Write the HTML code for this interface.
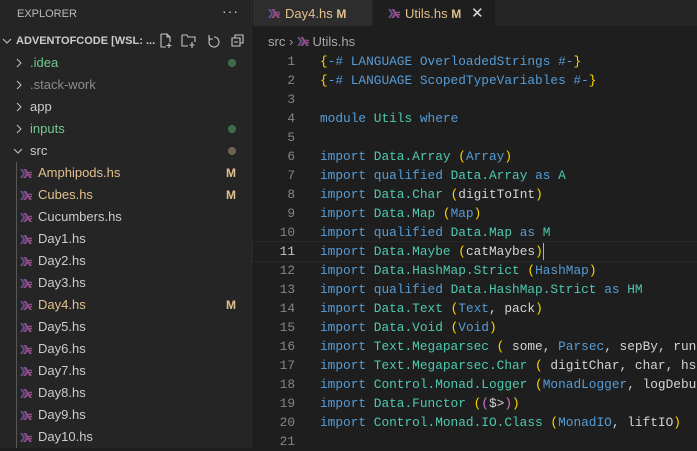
<!DOCTYPE html><html><head><style>
*{margin:0;padding:0;box-sizing:border-box}
body{width:697px;height:448px;overflow:hidden;background:#1e1e1e;font-family:"Liberation Sans",sans-serif;font-size:13px;color:#ccc;position:relative}
#side{position:absolute;left:0;top:0;width:252px;height:448px;background:#252526;border-right:1px solid #2b2b2b}
.r{position:absolute;left:0;width:252px;height:22px;line-height:22px;white-space:nowrap}
.ch{position:absolute;top:6px}
.dot{position:absolute;right:16px;top:7px;width:8px;height:8px;border-radius:4px}
.m{position:absolute;left:226px;color:#e2c08d;font-weight:bold;font-size:12px}
.hs{position:absolute;left:20px;top:7px}
.fn{position:absolute;left:38px}
#tabs{position:absolute;left:253px;top:0;width:444px;height:35px;background:#252526}
.tab{position:absolute;top:0;height:35px;line-height:27px;font-size:13px;color:#e2c08d}
#code{position:absolute;left:253px;top:1px;font-family:"Liberation Mono",monospace;font-size:12.8px}
.l{position:absolute;left:0;height:19px;line-height:19px;white-space:pre;width:444px}
.n{position:absolute;width:42px;text-align:right;color:#858585}
.t{position:absolute;left:67px}
.k{color:#569cd6}.c{color:#4ec9b0}.y{color:#ffd700}.p{color:#da70d6}.w{color:#d4d4d4}
</style></head><body>
<svg width="0" height="0" style="position:absolute"><defs><symbol id="h" viewBox="0 0 12 9"><path d="M0 0h2.5l3 4.5-3 4.5H0l3-4.5z" fill="#5e5086"/><path d="M3.5 0H6l6 9H9.5L7.6 6.2 5.8 9H3.3l3-4.5z" fill="#8f4e8b"/><path d="M8 2.7h4v1.4H8.9zM9.1 4.9H12v1.4H10z" fill="#8f4e8b"/></symbol>
<symbol id="cr" viewBox="0 0 10 10"><path d="M3 1l4 4-4 4" fill="none" stroke="#c5c5c5" stroke-width="1"/></symbol>
<symbol id="cd" viewBox="0 0 10 10"><path d="M1 3l4 4 4-4" fill="none" stroke="#c5c5c5" stroke-width="1"/></symbol></defs></svg>
<div id="side">
<div style="position:absolute;left:17px;top:8px;font-size:11px;color:#bbb">EXPLORER</div>
<div style="position:absolute;left:222px;top:3px;color:#ccc;font-size:14px;letter-spacing:1px">···</div>
<div class="r" style="top:30px"><svg class="ch" style="left:2px" width="10" height="10"><use href="#cd"/></svg><span style="position:absolute;left:16px;font-size:11px;font-weight:bold;color:#ccc">ADVENTOFCODE [WSL: ...</span>
<svg style="position:absolute;left:159px;top:3px" width="88" height="16" fill="none" stroke="#c5c5c5" stroke-width="1.1"><path d="M2 1h6l3 3v5M2 1v13h5M10 10v5M7.5 12.5h5M8 1v3h3"/><path d="M23 2h5l1 2h7v5M23 2v11h6M33 9v6M30.5 12h5"/><path d="M55 4a5 5 0 1 1-4 2M50 2v4h4" /><path d="M73 5h8v8h-8zM76 5V2h8v8h-3M75 9h4"/></svg></div>
<div class="r" style="top:52px"><svg class="ch" style="left:14px" width="10" height="10"><use href="#cr"/></svg><span class="fn" style="left:30px;color:#73c991">.idea</span><span class="dot" style="background:#3f6e4f"></span></div>
<div class="r" style="top:74px"><svg class="ch" style="left:14px" width="10" height="10"><use href="#cr"/></svg><span class="fn" style="left:30px;color:#8c8c8c">.stack-work</span></div>
<div class="r" style="top:96px"><svg class="ch" style="left:14px" width="10" height="10"><use href="#cr"/></svg><span class="fn" style="left:30px;color:#ccc">app</span></div>
<div class="r" style="top:118px"><svg class="ch" style="left:14px" width="10" height="10"><use href="#cr"/></svg><span class="fn" style="left:30px;color:#73c991">inputs</span><span class="dot" style="background:#3f6e4f"></span></div>
<div class="r" style="top:140px"><svg class="ch" style="left:13px" width="10" height="10"><use href="#cd"/></svg><span class="fn" style="left:30px;color:#ccc">src</span><span class="dot" style="background:#6d6453"></span></div>
<div style="position:absolute;left:16px;top:162px;width:1px;height:286px;background:#585858"></div>
<div class="r" style="top:162px"><svg class="hs" width="12" height="9"><use href="#h"/></svg><span class="fn" style="color:#e2c08d">Amphipods.hs</span><span class="m">M</span></div>
<div class="r" style="top:184px"><svg class="hs" width="12" height="9"><use href="#h"/></svg><span class="fn" style="color:#e2c08d">Cubes.hs</span><span class="m">M</span></div>
<div class="r" style="top:206px"><svg class="hs" width="12" height="9"><use href="#h"/></svg><span class="fn">Cucumbers.hs</span></div>
<div class="r" style="top:228px"><svg class="hs" width="12" height="9"><use href="#h"/></svg><span class="fn">Day1.hs</span></div>
<div class="r" style="top:250px"><svg class="hs" width="12" height="9"><use href="#h"/></svg><span class="fn">Day2.hs</span></div>
<div class="r" style="top:272px"><svg class="hs" width="12" height="9"><use href="#h"/></svg><span class="fn">Day3.hs</span></div>
<div class="r" style="top:294px"><svg class="hs" width="12" height="9"><use href="#h"/></svg><span class="fn" style="color:#e2c08d">Day4.hs</span><span class="m">M</span></div>
<div class="r" style="top:316px"><svg class="hs" width="12" height="9"><use href="#h"/></svg><span class="fn">Day5.hs</span></div>
<div class="r" style="top:338px"><svg class="hs" width="12" height="9"><use href="#h"/></svg><span class="fn">Day6.hs</span></div>
<div class="r" style="top:360px"><svg class="hs" width="12" height="9"><use href="#h"/></svg><span class="fn">Day7.hs</span></div>
<div class="r" style="top:382px"><svg class="hs" width="12" height="9"><use href="#h"/></svg><span class="fn">Day8.hs</span></div>
<div class="r" style="top:404px"><svg class="hs" width="12" height="9"><use href="#h"/></svg><span class="fn">Day9.hs</span></div>
<div class="r" style="top:426px"><svg class="hs" width="12" height="9"><use href="#h"/></svg><span class="fn">Day10.hs</span></div>
</div>
<div id="tabs">
<div class="tab" style="left:0;width:119px;background:#2d2d2d"><svg style="position:absolute;left:15px;top:9px" width="12" height="9"><use href="#h"/></svg><span style="position:absolute;left:32px">Day4.hs <b style="font-size:12px;font-weight:600">M</b></span></div>
<div class="tab" style="left:120px;width:122px;background:#1e1e1e"><svg style="position:absolute;left:15px;top:9px" width="12" height="9"><use href="#h"/></svg><span style="position:absolute;left:32px">Utils.hs <b style="font-size:12px;font-weight:600">M</b></span><span style="position:absolute;left:98px;top:0;color:#ddd;font-size:15px">✕</span></div>
</div>
<div style="position:absolute;left:253px;top:26px;width:444px;height:422px;background:#1e1e1e"></div>
<div style="position:absolute;left:268px;top:32px;font-size:13px;color:#a9a9a9;line-height:19px">src <span style="color:#999">›</span> <svg width="12" height="9"><use href="#h"/></svg> Utils.hs</div>
<div id="code">
<div class="l" style="top:51px"><span class="n">1</span><span class="t"><span class="y">{</span><span class="k">-# LANGUAGE OverloadedStrings #-</span><span class="y">}</span></span></div>
<div class="l" style="top:70px"><span class="n">2</span><span class="t"><span class="y">{</span><span class="k">-# LANGUAGE ScopedTypeVariables #-</span><span class="y">}</span></span></div>
<div class="l" style="top:89px"><span class="n">3</span></div>
<div class="l" style="top:108px"><span class="n">4</span><span class="t"><span class="k">module</span> <span class="c">Utils</span> <span class="k">where</span></span></div>
<div class="l" style="top:127px"><span class="n">5</span></div>
<div class="l" style="top:146px"><span class="n">6</span><span class="t"><span class="k">import</span> <span class="c">Data.Array</span> <span class="y">(</span><span class="k">Array</span><span class="y">)</span></span></div>
<div class="l" style="top:165px"><span class="n">7</span><span class="t"><span class="k">import</span> <span class="k">qualified</span> <span class="c">Data.Array</span> <span class="k">as</span> <span class="c">A</span></span></div>
<div class="l" style="top:184px"><span class="n">8</span><span class="t"><span class="k">import</span> <span class="c">Data.Char</span> <span class="y">(</span><span class="w">digitToInt</span><span class="y">)</span></span></div>
<div class="l" style="top:203px"><span class="n">9</span><span class="t"><span class="k">import</span> <span class="c">Data.Map</span> <span class="y">(</span><span class="k">Map</span><span class="y">)</span></span></div>
<div class="l" style="top:222px"><span class="n">10</span><span class="t"><span class="k">import</span> <span class="k">qualified</span> <span class="c">Data.Map</span> <span class="k">as</span> <span class="c">M</span></span></div>
<div class="l" style="top:241px;outline:1px solid #282828"><span class="n" style="color:#c6c6c6">11</span><span class="t"><span class="k">import</span> <span class="c">Data.Maybe</span> <span class="y">(</span><span class="w">catMaybes</span><span class="y">)</span><span style="display:inline-block;width:1px;height:17px;background:#aeafad;vertical-align:middle"></span></span></div>
<div class="l" style="top:260px"><span class="n">12</span><span class="t"><span class="k">import</span> <span class="c">Data.HashMap.Strict</span> <span class="y">(</span><span class="k">HashMap</span><span class="y">)</span></span></div>
<div class="l" style="top:279px"><span class="n">13</span><span class="t"><span class="k">import</span> <span class="k">qualified</span> <span class="c">Data.HashMap.Strict</span> <span class="k">as</span> <span class="c">HM</span></span></div>
<div class="l" style="top:298px"><span class="n">14</span><span class="t"><span class="k">import</span> <span class="c">Data.Text</span> <span class="y">(</span><span class="k">Text</span><span class="w">, pack</span><span class="y">)</span></span></div>
<div class="l" style="top:317px"><span class="n">15</span><span class="t"><span class="k">import</span> <span class="c">Data.Void</span> <span class="y">(</span><span class="k">Void</span><span class="y">)</span></span></div>
<div class="l" style="top:336px"><span class="n">16</span><span class="t"><span class="k">import</span> <span class="c">Text.Megaparsec</span> <span class="y">(</span><span class="w"> some, </span><span class="k">Parsec</span><span class="w">, sepBy, run</span></span></div>
<div class="l" style="top:355px"><span class="n">17</span><span class="t"><span class="k">import</span> <span class="c">Text.Megaparsec.Char</span> <span class="y">(</span><span class="w"> digitChar, char, hs</span></span></div>
<div class="l" style="top:374px"><span class="n">18</span><span class="t"><span class="k">import</span> <span class="c">Control.Monad.Logger</span> <span class="y">(</span><span class="k">MonadLogger</span><span class="w">, logDebu</span></span></div>
<div class="l" style="top:393px"><span class="n">19</span><span class="t"><span class="k">import</span> <span class="c">Data.Functor</span> <span class="y">(</span><span class="p">(</span><span class="w">$&gt;</span><span class="p">)</span><span class="y">)</span></span></div>
<div class="l" style="top:412px"><span class="n">20</span><span class="t"><span class="k">import</span> <span class="c">Control.Monad.IO.Class</span> <span class="y">(</span><span class="k">MonadIO</span><span class="w">, liftIO</span><span class="y">)</span></span></div>
<div class="l" style="top:431px"><span class="n">21</span></div>
</div>
</body></html>
